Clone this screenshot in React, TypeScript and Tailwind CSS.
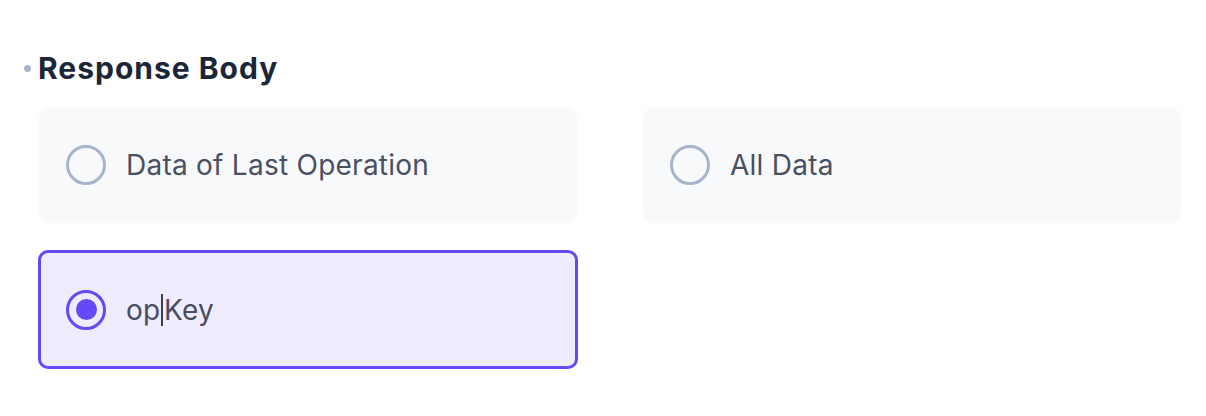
import React from "react";

function Radio({ checked }: { checked?: boolean }) {
  if (checked) {
    return (
      <span className="flex h-[40px] w-[40px] shrink-0 items-center justify-center rounded-full border-[3.5px] border-[#6549f6]">
        <span className="h-[21px] w-[21px] rounded-full bg-[#6549f6]" />
      </span>
    );
  }
  return <span className="h-[40px] w-[40px] shrink-0 rounded-full border-[3.5px] border-[#a7b5cc]" />;
}

export default function App() {
  return (
    <div
      className="min-h-[416px] w-[1206px] bg-white pt-[50px] pl-[24px] pr-[24px]"
      style={{ fontFamily: "Inter, 'Noto Sans', sans-serif" }}
    >
      <div className="flex items-center gap-[7px]">
        <span className="h-[7px] w-[7px] rounded-full bg-[#a7b5cc]" />
        <h2 className="text-[30px] leading-[36px] font-bold tracking-[1px] text-[#1c2639]">Response Body</h2>
      </div>
      <div className="mt-[20px] ml-[14px] grid grid-cols-2 gap-x-[64px] gap-y-[26px]">
        <div className="flex h-[118px] items-center gap-[20px] rounded-[12px] border-2 border-[#fbfcfd] bg-[#f8f9fb] pl-[26px]">
          <Radio />
          <span className="text-[28px] tracking-[0.25px] text-[#4a4f62]">Data of Last Operation</span>
        </div>
        <div className="flex h-[118px] items-center gap-[20px] rounded-[12px] border-2 border-[#fbfcfd] bg-[#f8f9fb] pl-[26px]">
          <Radio />
          <span className="text-[28px] tracking-[0.25px] text-[#4a4f62]">All Data</span>
        </div>
        <div className="flex h-[119px] items-center gap-[20px] rounded-[10px] border-[3px] border-[#6549f6] bg-[#efecfd] pl-[25px]">
          <Radio checked />
          <span className="flex items-center text-[28px] tracking-[0.25px] text-[#4a4c62]">
            op
            <span className="mx-[1px] inline-block h-[32px] w-[1.5px] bg-[#3a3c52]" />
            Key
          </span>
        </div>
      </div>
    </div>
  );
}
